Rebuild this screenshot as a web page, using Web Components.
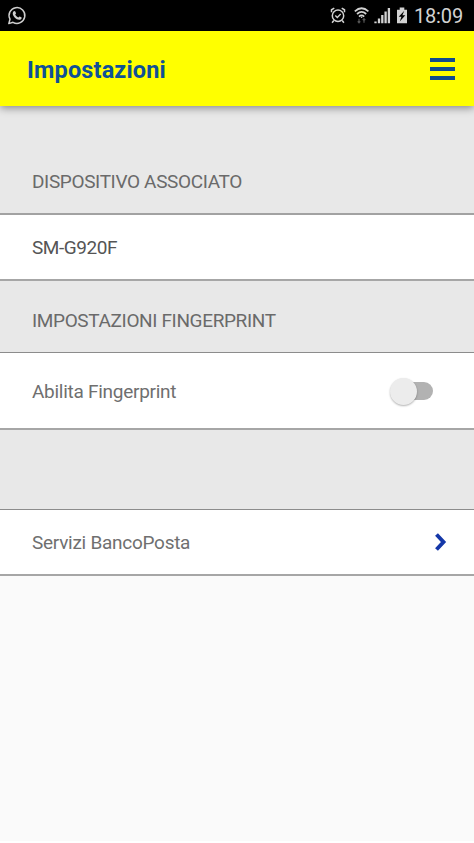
<!DOCTYPE html>
<html lang="it"><head><meta charset="utf-8"><title>Impostazioni</title>
<style>html,body{margin:0;height:100%;background:#fff}body{overflow:hidden;font-family:Roboto,"Liberation Sans",sans-serif}</style></head>
<body><settings-screen></settings-screen>
<script>
const define = (name, html) => {
  const t = document.createElement('template');
  t.innerHTML = html;
  customElements.define(name, class extends HTMLElement {
    constructor() { super(); this.attachShadow({mode: 'open'}).append(t.content.cloneNode(true)); }
  });
};
define('status-bar', `<style>
:host{display:flex;align-items:center;height:31px;box-sizing:border-box;padding:0 11px 0 7px;background:#000;color:#d2d2d2;font-size:20px}
svg{display:block;flex:none}.sp{flex:1}.time{line-height:31px;margin-top:2px;letter-spacing:-.15px}
</style>
<svg width="20" height="31" viewBox="0 0 20 31"><path d="M1.8 23.6 3 19.2A7.9 7.9 0 1 1 6 22.3Z" fill="none" stroke="#cfcfcf" stroke-width="1.5" stroke-linejoin="round"/><path d="M6.4 11.6c.6-.8 1.6-.8 1.9 0l.7 1.7c.1.4-.6 1-.8 1.3.7 1.4 1.7 2.4 3.2 3 .4-.4.9-1.3 1.4-1.1l1.8.9c.3.3 0 1.300-.6 1.800-2 1.300-4.600 0-6.100-1.500-1.600-1.700-3-3.900-1.500-6.100Z" fill="#cfcfcf"/></svg>
<span class="sp"></span>
<svg width="86" height="31" viewBox="328 0 86 31" fill="none" stroke="#d2d2d2">
<circle cx="338" cy="15.800" r="5.700" stroke-width="1.500"/><path d="m335.300 15.500 2 2 3.400-3.500" stroke-width="1.300"/><path d="M331.500 12.300v-2.500l2.800-1.600M344.500 12.300v-2.500l-2.800-1.600M333.800 20.500l-1.700 2.200M342.200 20.500l1.700 2.200" stroke-width="1.500"/>
<path d="M354.800 11.300Q361.600 5.200 368.400 11.300M357 14Q361.600 9.800 366.200 14M359 16.600Q361.600 14.300 364.200 16.600" stroke-width="1.700"/><circle cx="361.600" cy="17.300" r=".8" fill="#d2d2d2" stroke="none"/>
<path d="M359 18.700v4M364 18.700v4M357.700 21.300l1.300 1.500 1.300-1.500M362.700 20.100l1.300-1.500 1.300 1.500" stroke="#555" stroke-width="1.200"/>
<path d="M375.500 21.500v1.800M379 18.500v4.800M382.300 15v8.300M385.600 11.500v11.800M388.900 8v15.300" stroke-width="2.300"/>
<path d="M397 9.800h2.700V7.500h4.600v2.300h2.700v13.400h-10z" fill="#d2d2d2" stroke="none"/><path d="m404.300 10.800-5.600 6h2.700l-1.600 4.600 5.500-6.200h-2.900z" fill="#000" stroke="none"/>
</svg><span class="time">18:09</span>`);
define('menu-button', `<style>:host{display:flex;flex-direction:column;gap:5px;width:25px}i{height:4px;background:#114c8c}</style><i></i><i></i><i></i>`);
define('app-header', `<style>
:host{display:flex;align-items:center;justify-content:space-between;height:75px;box-sizing:border-box;padding:0 19px 0 27px;background:#ff0;color:#0f5196;box-shadow:0 2px 8px rgba(0,0,0,.42);position:relative;z-index:1}
h1{margin:2px 0 0;font-size:23.500px;font-weight:700;line-height:30px;letter-spacing:.15px}
</style><h1><slot></slot></h1><slot name="action"></slot>`);
define('section-title', `<style>
:host{display:flex;align-items:flex-end;box-sizing:border-box;height:var(--h);padding:0 32px var(--pb,19px);background:#e8e8e8;border-bottom:var(--line,1px solid #8c8c8c);color:#6a6a6a;font-size:19px;line-height:24px;letter-spacing:-.36px}
</style><span><slot></slot></span>`);
define('setting-row', `<style>
:host{display:flex;align-items:center;justify-content:space-between;box-sizing:border-box;height:var(--h);padding:1px 27px 0 32px;background:#fff;border-bottom:2px solid #a6a6a6;color:#6f6f6f;font-size:19px;line-height:24px;letter-spacing:-.27px}
span{padding-top:2px}
:host([strong]){padding-top:0;color:#555;letter-spacing:-.45px}
:host([raised]){padding-top:0}
</style><span><slot></slot></span><slot name="control"></slot>`);
define('toggle-switch', `<style>
:host{display:flex;align-items:center;width:44px;height:28px;margin-right:13px}
.track{width:38px;height:18px;border-radius:9px;background:#b2b2b2;margin-left:5px;display:flex;align-items:center}
.thumb{flex:none;width:27px;height:27px;border-radius:50%;background:#ececec;margin-left:-5px;box-shadow:0 1px 2px rgba(0,0,0,.3)}
</style><div class="track"><div class="thumb"></div></div>`);
define('chevron-right', `<style>:host,svg{display:block}</style><svg width="13" height="20" viewBox="0 0 13 20"><path d="m2.500 2.500 7 7.500-7 7.500" fill="none" stroke="#1437a8" stroke-width="3.900"/></svg>`);
define('settings-screen', `<style>
:host{display:flex;flex-direction:column;height:841px;background:#fafafa}
</style>
<status-bar></status-bar>
<app-header>Impostazioni<menu-button slot="action"></menu-button></app-header>
<section-title style="--h:109px;--line:2px solid #a2a2a2">DISPOSITIVO ASSOCIATO</section-title>
<setting-row strong style="--h:66px">SM-G920F</setting-row>
<section-title style="--h:72px">IMPOSTAZIONI FINGERPRINT</section-title>
<setting-row style="--h:77px">Abilita Fingerprint<toggle-switch slot="control"></toggle-switch></setting-row>
<section-title style="--h:80px"></section-title>
<setting-row raised style="--h:66px">Servizi BancoPosta<chevron-right slot="control"></chevron-right></setting-row>`);
</script></body></html>
